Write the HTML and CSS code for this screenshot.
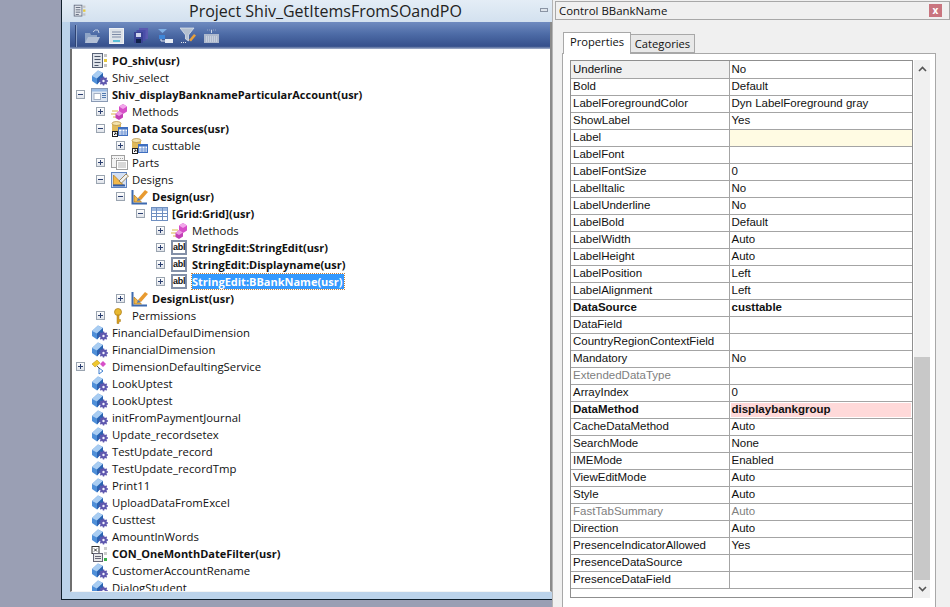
FILE: index.html
```html
<!DOCTYPE html>
<html lang="en">
<head>
<meta charset="UTF-8" />
<title>Project Shiv_GetItemsFromSOandPO</title>
<link rel="stylesheet" href="styles.css">
</head>
<body>

<svg class="defs" width="0" height="0">
  <symbol id="ic-class" viewBox="0 0 18 16">
    <path d="M1 6 L7 0.500 L12 3 L12 8 L6 14.500 L1 11 Z" fill="#4f8fd8"/>
    <path d="M1 6 L7 0.500 L12 3 L6 8.500 Z" fill="#a9cdf2"/>
    <path d="M6 8.500 L12 3 L12 8 L6 14.500 Z" fill="#2a62b0"/>
    <circle cx="12.500" cy="11" r="3.400" fill="#5f58ae"/>
    <path d="M12.500 6.500v9M8 11h9M9.300 7.800l6.400 6.400M15.700 7.800l-6.400 6.400" stroke="#5f58ae" stroke-width="1.500"/>
    <circle cx="12.500" cy="11" r="1.200" fill="#f4f4ff"/>
  </symbol>
  <symbol id="ic-job" viewBox="0 0 18 16">
    <rect x="1.500" y="0.500" width="10" height="14" fill="#dfe3ea" stroke="#5a6478"/>
    <path d="M3.500 3.500h6M3.500 6.500h6M3.500 9.500h6M3.500 12.500h4" stroke="#4a5468"/>
    <rect x="13" y="1" width="3" height="3" fill="#c4c4c4"/>
    <rect x="13" y="6" width="3" height="3" fill="#e8c93a"/>
    <rect x="13" y="11" width="3" height="3" fill="#c4c4c4"/>
  </symbol>
  <symbol id="ic-query" viewBox="0 0 18 16">
    <rect x="1" y="0.500" width="7" height="7" fill="#fff" stroke="#333"/>
    <path d="M3 2.500l3 3M6 2.500l-3 3" stroke="#333"/>
    <rect x="2.500" y="7.500" width="9" height="8" fill="#e8e8e8" stroke="#667"/>
    <path d="M4 10.500h6M4 12.500h6" stroke="#667"/>
    <rect x="13" y="1" width="3" height="3" fill="#ccc"/>
    <rect x="13" y="6" width="3" height="3" fill="#ccc"/>
    <rect x="13" y="12" width="3" height="3" fill="#3bb04a"/>
  </symbol>
  <symbol id="ic-form" viewBox="0 0 18 16">
    <rect x="0.500" y="1.500" width="16" height="13" fill="#dde6f2" stroke="#8a9ab4"/>
    <rect x="1" y="2" width="15" height="2.500" fill="#9bbbe4"/>
    <rect x="3" y="6.500" width="6.500" height="6" fill="#fff" stroke="#a4b0c4"/>
    <path d="M11 6.500h4M11 8.500h4M11 10.500h4" stroke="#4f78b0"/>
  </symbol>
  <symbol id="ic-methods" viewBox="0 0 18 16">
    <path d="M1 7h6M0 10h5M2 13h5" stroke="#d9b64a"/>
    <path d="M12 0l4 2.500v5L12 10 8 7.500v-5z" fill="#d64fc8"/>
    <path d="M12 0l4 2.500L12 5 8 2.500z" fill="#f2a6ea"/>
    <path d="M8 7l4 2.500v4L8 16l-3.500-2v-4z" fill="#c23fb6"/>
    <path d="M8 7l4 2.500L8 12l-3.500-2z" fill="#ee96e4"/>
  </symbol>
  <symbol id="ic-datasources" viewBox="0 0 18 16">
    <path d="M1 2.500v9h9v-9z" fill="#dfb95a"/>
    <ellipse cx="5.500" cy="2.500" rx="4.500" ry="2" fill="#f4e3ad" stroke="#b08a38" stroke-width=".7"/>
    <rect x="7.500" y="6.500" width="9" height="8" fill="#fff" stroke="#3f6fc0"/>
    <path d="M8 7.500h8" stroke="#3f6fc0" stroke-width="2"/>
    <path d="M8 11h8M8 13h8M11 8v6M14 8v6" stroke="#6f94d4"/>
    <rect x="1.500" y="10.500" width="5" height="5" fill="#fff" stroke="#222"/>
    <path d="M3 14l2-2M3.500 12H5v1.500" stroke="#222" fill="none"/>
  </symbol>
  <symbol id="ic-parts" viewBox="0 0 18 16">
    <rect x="0.500" y="0.500" width="13" height="12" fill="#f4f4f4" stroke="#a0a0a0"/>
    <path d="M1 3.500h12" stroke="#a0a0a0" stroke-dasharray="1 1"/>
    <rect x="5.500" y="5.500" width="11" height="9" fill="#fff" stroke="#a0a0a0"/>
    <path d="M7 8h8M7 10h8M7 12h8" stroke="#b0b0b0"/>
  </symbol>
  <symbol id="ic-designs" viewBox="0 0 18 16">
    <rect x="0.500" y="0.500" width="15" height="15" fill="#d4e0f4" stroke="#5f84c0"/>
    <path d="M2.500 3v10h10z" fill="#f2b84a" stroke="#b07a20" stroke-width=".7"/>
    <path d="M8 9l7-7 2.500 2-7 7z" fill="#f0f0f0" stroke="#806020" stroke-width=".7"/>
    <path d="M2 13.500h12" stroke="#2f5cab" stroke-width="2"/>
  </symbol>
  <symbol id="ic-design" viewBox="0 0 18 16">
    <path d="M1.500 1v13.500H16" fill="none" stroke="#3d6ab0" stroke-width="2"/>
    <path d="M3 6l7.500 7H3z" fill="#f2b84a" stroke="#b07a20" stroke-width=".7"/>
    <path d="M7 9l7-8 3 2-7 8z" fill="#e89a30"/>
    <path d="M7 9l3 2-4 1z" fill="#4f78b0"/>
  </symbol>
  <symbol id="ic-grid" viewBox="0 0 18 16">
    <rect x="0.500" y="1.500" width="16" height="13" fill="#fff" stroke="#6f8fc0"/>
    <rect x="1" y="2" width="15" height="3" fill="#9db8e0"/>
    <path d="M1 7.500h15M1 10.500h15M5.500 2v12M11.500 2v12" stroke="#6f8fc0"/>
  </symbol>
  <symbol id="ic-key" viewBox="0 0 18 16">
    <circle cx="7" cy="4" r="3.500" fill="#e8b830" stroke="#a87a18" stroke-width=".7"/>
    <path d="M6 7v8.500h2v-2h1.500v-2H8V7z" fill="#d8a020" stroke="#a87a18" stroke-width=".5"/>
  </symbol>
  <symbol id="ic-service" viewBox="0 0 18 16">
    <path d="M1 5l5-4 3 3-5 4z" fill="#f0c830" stroke="#b08a18" stroke-width=".5"/>
    <path d="M12 2l3 3-3 3-3-3z" fill="#d64fc8"/>
    <path d="M8 9l4 3-4 3z" fill="#fff" stroke="#3f7fd0"/>
    <path d="M6 7l3 3" stroke="#555"/>
  </symbol>
</svg>

<div class="desktop">
  <div class="project-window">
    <div class="title-bar">
      <svg class="title-icon" width="14" height="16"><use href="#ic-job"/></svg>
      <span class="title-text">Project Shiv_GetItemsFromSOandPO</span>
      <span class="title-grip"></span>
    </div>
    <div class="project-inner">
      <div class="toolbar">
        <span class="tool-handle"></span>
        <!-- open -->
        <svg class="tool" width="17" height="16" viewBox="0 0 17 16"><path d="M1 15V5h5l1 2h6v8z" fill="#8ea4c6"/><path d="M1 15l3-6h12l-3 6z" fill="#b3c0d6"/><path d="M9 4q2-3 5-2l1 3" fill="none" stroke="#c3cfe3"/></svg>
        <!-- properties -->
        <svg class="tool" width="16" height="16" viewBox="0 0 16 16"><rect x="0.500" y="0.500" width="14" height="15" fill="#dde2e8" stroke="#eef1f5"/><path d="M3 4h9M3 6.500h9M3 9h9" stroke="#7c8aa6"/><rect x="4" y="12" width="7" height="2" fill="#5cc0d8"/></svg>
        <!-- stack -->
        <svg class="tool" width="16" height="16" viewBox="0 0 16 16"><rect x="6" y="0" width="9" height="11" fill="#5a5ab0"/><rect x="3.500" y="2" width="9" height="11" fill="#4a4ea8"/><rect x="1" y="4" width="9" height="11" fill="#3a4494"/><rect x="3" y="5" width="5" height="4" fill="#d0d5ee"/><rect x="3" y="11" width="5" height="4" fill="#10204a"/></svg>
        <!-- tree -->
        <svg class="tool tool-tree" width="15" height="16" viewBox="0 0 15 16"><path d="M0 1h9L4.500 5z" fill="#7fb0e6"/><rect x="1" y="7" width="6" height="4" fill="#3f86d8"/><rect x="7" y="11" width="8" height="4" fill="#e8edf5"/><path d="M3 11v2h4" stroke="#dfe6f2" fill="none"/></svg>
        <!-- filter -->
        <svg class="tool tool-filter" width="17" height="17" viewBox="0 0 17 17"><path d="M0 1h14L8.500 8v6L5.500 12V8z" fill="#b4c0d0" stroke="#e4e9f1" stroke-width=".7"/><path d="M9 13l5-6 2 1.500-5 6z" fill="#e8a03a"/><path d="M1 15.500h5" stroke="#e8eaf0" stroke-dasharray="1 1"/></svg>
        <!-- keyboard -->
        <svg class="tool" width="16" height="16" viewBox="0 0 16 16"><rect x="0" y="6" width="15" height="9" fill="#aeb9cd"/><path d="M2 9h11M2 11h11M2 13h11" stroke="#e2e7ef" stroke-dasharray="1 1"/><path d="M3 2h9" stroke="#98a8c6" stroke-dasharray="1 1"/><path d="M7.500 2v3" stroke="#c9d4e6"/></svg>
      </div>
      <ul class="tree">
        <li class="node lv0 bold"><span class="exp none"></span><svg class="icon"><use href="#ic-job"/></svg>PO_shiv(usr)</li>
        <li class="node lv0"><span class="exp none"></span><svg class="icon"><use href="#ic-class"/></svg>Shiv_select</li>
        <li class="node lv0 bold"><span class="exp open"></span><svg class="icon"><use href="#ic-form"/></svg>Shiv_displayBanknameParticularAccount(usr)</li>
        <li class="node lv1"><span class="exp"></span><svg class="icon"><use href="#ic-methods"/></svg>Methods</li>
        <li class="node lv1 bold"><span class="exp open"></span><svg class="icon"><use href="#ic-datasources"/></svg>Data Sources(usr)</li>
        <li class="node lv2"><span class="exp"></span><svg class="icon"><use href="#ic-datasources"/></svg>custtable</li>
        <li class="node lv1"><span class="exp"></span><svg class="icon"><use href="#ic-parts"/></svg>Parts</li>
        <li class="node lv1"><span class="exp open"></span><svg class="icon"><use href="#ic-designs"/></svg>Designs</li>
        <li class="node lv2 bold"><span class="exp open"></span><svg class="icon"><use href="#ic-design"/></svg>Design(usr)</li>
        <li class="node lv3 bold"><span class="exp open"></span><svg class="icon"><use href="#ic-grid"/></svg>[Grid:Grid](usr)</li>
        <li class="node lv4"><span class="exp"></span><svg class="icon"><use href="#ic-methods"/></svg>Methods</li>
        <li class="node lv4 bold"><span class="exp"></span><span class="abl">abl</span>StringEdit:StringEdit(usr)</li>
        <li class="node lv4 bold"><span class="exp"></span><span class="abl">abl</span>StringEdit:Displayname(usr)</li>
        <li class="node lv4 bold"><span class="exp"></span><span class="abl">abl</span><span class="selected">StringEdit:BBankName(usr)</span></li>
        <li class="node lv2 bold"><span class="exp"></span><svg class="icon"><use href="#ic-design"/></svg>DesignList(usr)</li>
        <li class="node lv1"><span class="exp"></span><svg class="icon"><use href="#ic-key"/></svg>Permissions</li>
        <li class="node lv0"><span class="exp none"></span><svg class="icon"><use href="#ic-class"/></svg>FinancialDefaulDimension</li>
        <li class="node lv0"><span class="exp none"></span><svg class="icon"><use href="#ic-class"/></svg>FinancialDimension</li>
        <li class="node lv0"><span class="exp"></span><svg class="icon"><use href="#ic-service"/></svg>DimensionDefaultingService</li>
        <li class="node lv0"><span class="exp none"></span><svg class="icon"><use href="#ic-class"/></svg>LookUptest</li>
        <li class="node lv0"><span class="exp none"></span><svg class="icon"><use href="#ic-class"/></svg>LookUptest</li>
        <li class="node lv0"><span class="exp none"></span><svg class="icon"><use href="#ic-class"/></svg>initFromPaymentJournal</li>
        <li class="node lv0"><span class="exp none"></span><svg class="icon"><use href="#ic-class"/></svg>Update_recordsetex</li>
        <li class="node lv0"><span class="exp none"></span><svg class="icon"><use href="#ic-class"/></svg>TestUpdate_record</li>
        <li class="node lv0"><span class="exp none"></span><svg class="icon"><use href="#ic-class"/></svg>TestUpdate_recordTmp</li>
        <li class="node lv0"><span class="exp none"></span><svg class="icon"><use href="#ic-class"/></svg>Print11</li>
        <li class="node lv0"><span class="exp none"></span><svg class="icon"><use href="#ic-class"/></svg>UploadDataFromExcel</li>
        <li class="node lv0"><span class="exp none"></span><svg class="icon"><use href="#ic-class"/></svg>Custtest</li>
        <li class="node lv0"><span class="exp none"></span><svg class="icon"><use href="#ic-class"/></svg>AmountInWords</li>
        <li class="node lv0 bold"><span class="exp none"></span><svg class="icon"><use href="#ic-query"/></svg>CON_OneMonthDateFilter(usr)</li>
        <li class="node lv0"><span class="exp none"></span><svg class="icon"><use href="#ic-class"/></svg>CustomerAccountRename</li>
        <li class="node lv0"><span class="exp none"></span><svg class="icon"><use href="#ic-class"/></svg>DialogStudent</li>
      </ul>
    </div>
  </div>

  <div class="control-panel">
    <div class="panel-head">
      <span>Control BBankName</span>
      <span class="close-btn">x</span>
    </div>
    <div class="tabs">
      <span class="tab active">Properties</span>
      <span class="tab">Categories</span>
    </div>
    <div class="tab-body">
      <div class="grid-wrap">
        <table class="props">
          <tr><td class="current">Underline</td><td>No</td></tr>
          <tr><td>Bold</td><td>Default</td></tr>
          <tr><td>LabelForegroundColor</td><td>Dyn LabelForeground gray</td></tr>
          <tr><td>ShowLabel</td><td>Yes</td></tr>
          <tr><td>Label</td><td class="yellow"></td></tr>
          <tr><td>LabelFont</td><td></td></tr>
          <tr><td>LabelFontSize</td><td>0</td></tr>
          <tr><td>LabelItalic</td><td>No</td></tr>
          <tr><td>LabelUnderline</td><td>No</td></tr>
          <tr><td>LabelBold</td><td>Default</td></tr>
          <tr><td>LabelWidth</td><td>Auto</td></tr>
          <tr><td>LabelHeight</td><td>Auto</td></tr>
          <tr><td>LabelPosition</td><td>Left</td></tr>
          <tr><td>LabelAlignment</td><td>Left</td></tr>
          <tr class="bold"><td>DataSource</td><td>custtable</td></tr>
          <tr><td>DataField</td><td></td></tr>
          <tr><td>CountryRegionContextField</td><td></td></tr>
          <tr><td>Mandatory</td><td>No</td></tr>
          <tr class="muted"><td>ExtendedDataType</td><td></td></tr>
          <tr><td>ArrayIndex</td><td>0</td></tr>
          <tr class="bold"><td>DataMethod</td><td class="pink">displaybankgroup</td></tr>
          <tr><td>CacheDataMethod</td><td>Auto</td></tr>
          <tr><td>SearchMode</td><td>None</td></tr>
          <tr><td>IMEMode</td><td>Enabled</td></tr>
          <tr><td>ViewEditMode</td><td>Auto</td></tr>
          <tr><td>Style</td><td>Auto</td></tr>
          <tr class="muted"><td>FastTabSummary</td><td>Auto</td></tr>
          <tr><td>Direction</td><td>Auto</td></tr>
          <tr><td>PresenceIndicatorAllowed</td><td>Yes</td></tr>
          <tr><td>PresenceDataSource</td><td></td></tr>
          <tr><td>PresenceDataField</td><td></td></tr>
        </table>
      </div>
      <div class="scrollbar">
        <svg class="arrow" width="9" height="6" viewBox="0 0 9 6"><path d="M1 5l3.500-3.500L8 5" fill="none" stroke="#555" stroke-width="1.600"/></svg>
        <div class="track"><div class="thumb"></div></div>
        <svg class="arrow" width="9" height="6" viewBox="0 0 9 6"><path d="M1 1l3.500 3.500L8 1" fill="none" stroke="#555" stroke-width="1.600"/></svg>
      </div>
    </div>
  </div>
</div>

</body>
</html>
```

FILE: styles.css
```css
* {
  box-sizing: border-box;
}

html, body {
  margin: 0;
  padding: 0;
  height: 607px;
  overflow: hidden;
}

body {
  font-family: "Open Sans", "Noto Sans", sans-serif;
  font-size: 11.35px;
  color: #111;
  background: #9a9fb4;
}

.defs {
  display: block;
  height: 0;
}

.desktop {
  display: flex;
  height: 607px;
  padding-left: 61px;
}

/* Project window */
.project-window {
  width: 491px;
  height: 600px;
  display: flex;
  flex-direction: column;
  background: #bcd3ea;
  border-left: 1px solid #10202c;
  border-bottom: 1px solid #10202c;
  padding: 0 0 7px 8px;
}

.title-bar {
  height: 22px;
  flex: none;
  display: flex;
  align-items: center;
  background: linear-gradient(#e4edf6, #d3e1ef);
  margin-left: -8px;
  padding-left: 11px;
}

.title-icon {
  flex: none;
}

.title-text {
  flex: 1;
  padding-left: 102px;
  font-size: 16px;
  color: #222;
}

.title-grip {
  width: 8px;
  height: 4px;
  background: #dfe5ec;
  border: 1px solid #8a94a4;
  margin-right: 4px;
  margin-top: -2px;
}

.project-inner {
  flex: 1;
  min-height: 0;
  display: flex;
  flex-direction: column;
  background: #fff;
  border-left: 2px solid #6f6f6f;
  border-bottom: 1px solid #f4f4f4;
  border-right: 2px solid #8a8a8a;
}

.toolbar {
  height: 27px;
  flex: none;
  display: flex;
  align-items: center;
  background: linear-gradient(#6f8bc0, #4d6ba6 45%, #36508c 90%, #a9b4cc);
  margin-left: -2px;
  padding-left: 5px;
}

.tool-handle {
  width: 2px;
  height: 22px;
  background: #2d4272;
  border-right: 1px solid #8ea3c9;
  margin-right: 7px;
}

.tool {
  flex: none;
  margin-right: 8px;
}

.tool-tree {
  margin-left: 1px;
  margin-right: 7px;
}

.tool-filter {
  margin-right: 7px;
}

.tree {
  list-style: none;
  margin: 0;
  padding: 3px 0 0;
  flex: 1;
  min-height: 0;
  overflow: hidden;
}

.node {
  display: flex;
  align-items: center;
  height: 17px;
  white-space: nowrap;
}

.node.bold {
  font-size: 11px;
  font-weight: 700;
}

.lv0 { padding-left: 4px; }
.lv1 { padding-left: 24px; }
.lv2 { padding-left: 44px; }
.lv3 { padding-left: 64px; }
.lv4 { padding-left: 84px; }

.exp {
  flex: none;
  position: relative;
  width: 9px;
  height: 9px;
  margin-right: 6px;
  border: 1px solid #9aa4b0;
  background: linear-gradient(#fff, #dfe3ea);
}

.exp::before,
.exp::after {
  content: "";
  position: absolute;
  background: #2b3f70;
}

.exp::before {
  left: 1px;
  top: 3px;
  width: 5px;
  height: 1px;
}

.exp::after {
  left: 3px;
  top: 1px;
  width: 1px;
  height: 5px;
}

.exp.open::after {
  display: none;
}

.exp.none {
  visibility: hidden;
}

.icon {
  flex: none;
  width: 18px;
  height: 16px;
  margin-right: 3px;
}

.abl {
  flex: none;
  width: 16px;
  height: 15px;
  margin-right: 5px;
  border: 2px solid #8390a8;
  background: #fff;
  font-family: "Liberation Sans", sans-serif;
  font-size: 9px;
  font-weight: 700;
  line-height: 11px;
  text-align: center;
  letter-spacing: -0.3px;
  color: #111;
}

.selected {
  background: #3399ff;
  color: #fff;
  padding: 0 1px 0 0;
  height: 15px;
  line-height: 15px;
  outline: 1px dotted #c08040;
}

/* Control properties panel */
.control-panel {
  width: 398px;
  height: 607px;
  background: #f0f0f0;
  border-left: 1px solid #b4b4b4;
  padding: 1px 0 0 2px;
}

.panel-head {
  height: 19px;
  display: flex;
  align-items: center;
  justify-content: space-between;
  border: 1px solid #a8a8a8;
  padding: 0 7px 0 3px;
  font-size: 11.4px;
}

.close-btn {
  width: 13px;
  height: 13px;
  background: #c9757f;
  color: #fff;
  font-size: 10px;
  font-weight: 700;
  line-height: 12px;
  text-align: center;
}

.tabs {
  display: flex;
  align-items: flex-end;
  height: 33px;
  padding-left: 8px;
}

.tab {
  width: 64px;
  height: 19px;
  border: 1px solid #a8a8a8;
  border-left: 0;
  background: #e8e8e8;
  line-height: 18px;
  font-size: 11.2px;
  text-align: center;
}

.tab.active {
  width: 68px;
  height: 22px;
  background: #fff;
  border-left: 1px solid #a8a8a8;
  border-bottom: 0;
  position: relative;
  top: 1px;
}

.tab-body {
  display: flex;
  width: 374px;
  height: 560px;
  margin-left: 7px;
  padding: 6px 7px 0;
  background: #fff;
  border: 1px solid #a8a8a8;
}

.grid-wrap {
  width: 343px;
  height: 538px;
  flex: none;
  border: 1px solid #8f8f8f;
  overflow: hidden;
}

.props {
  width: 341px;
  table-layout: fixed;
  border-collapse: collapse;
  font-family: "Liberation Sans", sans-serif;
  font-size: 11.5px;
}

.props td {
  height: 17px;
  padding: 0 0 1px 2px;
  border-bottom: 1px solid #a4a4a4;
  white-space: nowrap;
  overflow: hidden;
}

.props td:first-child {
  width: 158px;
  border-right: 1px solid #a4a4a4;
}

.props td.current {
  background: #f0f0f0;
}

.props td.yellow {
  background: #fffbe3;
}

.props td.pink {
  background: #ffd9d9;
  box-shadow: inset 0 0 0 1px #fff;
}

.props .bold td {
  font-weight: 700;
}

.props .muted td {
  color: #808080;
}

.scrollbar {
  flex: none;
  width: 16px;
  height: 538px;
  background: #f0f0f0;
  display: flex;
  flex-direction: column;
  align-items: center;
  padding: 6px 0;
  margin-left: 1px;
}

.track {
  flex: 1;
  width: 100%;
  margin: 5px 0 4px;
  display: flex;
  align-items: flex-end;
  padding-bottom: 2px;
}

.thumb {
  width: 100%;
  height: 223px;
  background: #c8c8c8;
}

.arrow {
  flex: none;
}
```
